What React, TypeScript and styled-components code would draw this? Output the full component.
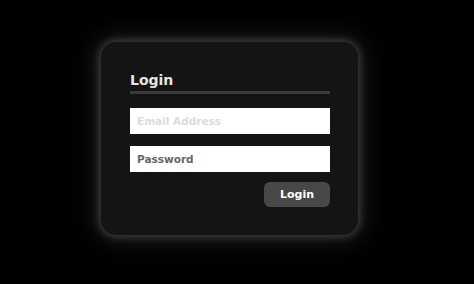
import React from 'react';
import styled, { createGlobalStyle } from 'styled-components';

const GlobalStyle = createGlobalStyle`
  html, body {
    margin: 0;
    padding: 0;
    background: #000;
  }
  body {
    font-family: "DejaVu Sans", Verdana, sans-serif;
  }
`;

const Page = styled.div`
  width: 474px;
  height: 284px;
  padding: 42px 0 0 101px;
  box-sizing: border-box;
`;

const Card = styled.form`
  width: 257px;
  height: 193px;
  box-sizing: border-box;
  background: #141414;
  border-radius: 15px;
  box-shadow: 0 0 8px 2px rgba(255, 255, 255, 0.2), 0 0 24px 8px rgba(255, 255, 255, 0.09);
  padding: 29px 28px 0 29px;
  display: flex;
  flex-direction: column;
`;

const Title = styled.h2`
  margin: 0;
  color: #e4e4e4;
  font-size: 14px;
  font-weight: bold;
  line-height: 18px;
  padding-bottom: 2px;
  border-bottom: 3px solid #3a3a3a;
`;

const Field = styled.input<{ $muted?: boolean }>`
  display: block;
  width: 100%;
  height: 26px;
  box-sizing: border-box;
  border: none;
  outline: none;
  background: #fff;
  padding: 0 7px;
  font-family: "DejaVu Sans", Verdana, sans-serif;
  font-weight: bold;
  font-size: 10.5px;
  color: #666;
  margin-top: ${p => (p.$muted ? '14px' : '12px')};

  &::placeholder {
    color: ${p => (p.$muted ? '#dcdcdc' : '#666')};
    opacity: 1;
  }
`;

const Actions = styled.div`
  display: flex;
  justify-content: flex-end;
  margin-top: 10px;
`;

const Button = styled.button`
  width: 66px;
  height: 25px;
  border: none;
  border-radius: 6px;
  background: #484848;
  color: #fff;
  font-family: "DejaVu Sans", Verdana, sans-serif;
  font-weight: bold;
  font-size: 11px;
  cursor: pointer;
`;

export default function App() {
  return (
    <>
      <GlobalStyle />
      <Page>
        <Card onSubmit={e => e.preventDefault()}>
          <Title>Login</Title>
          <Field $muted type="email" placeholder="Email Address" />
          <Field type="password" placeholder="Password" />
          <Actions>
            <Button type="submit">Login</Button>
          </Actions>
        </Card>
      </Page>
    </>
  );
}
